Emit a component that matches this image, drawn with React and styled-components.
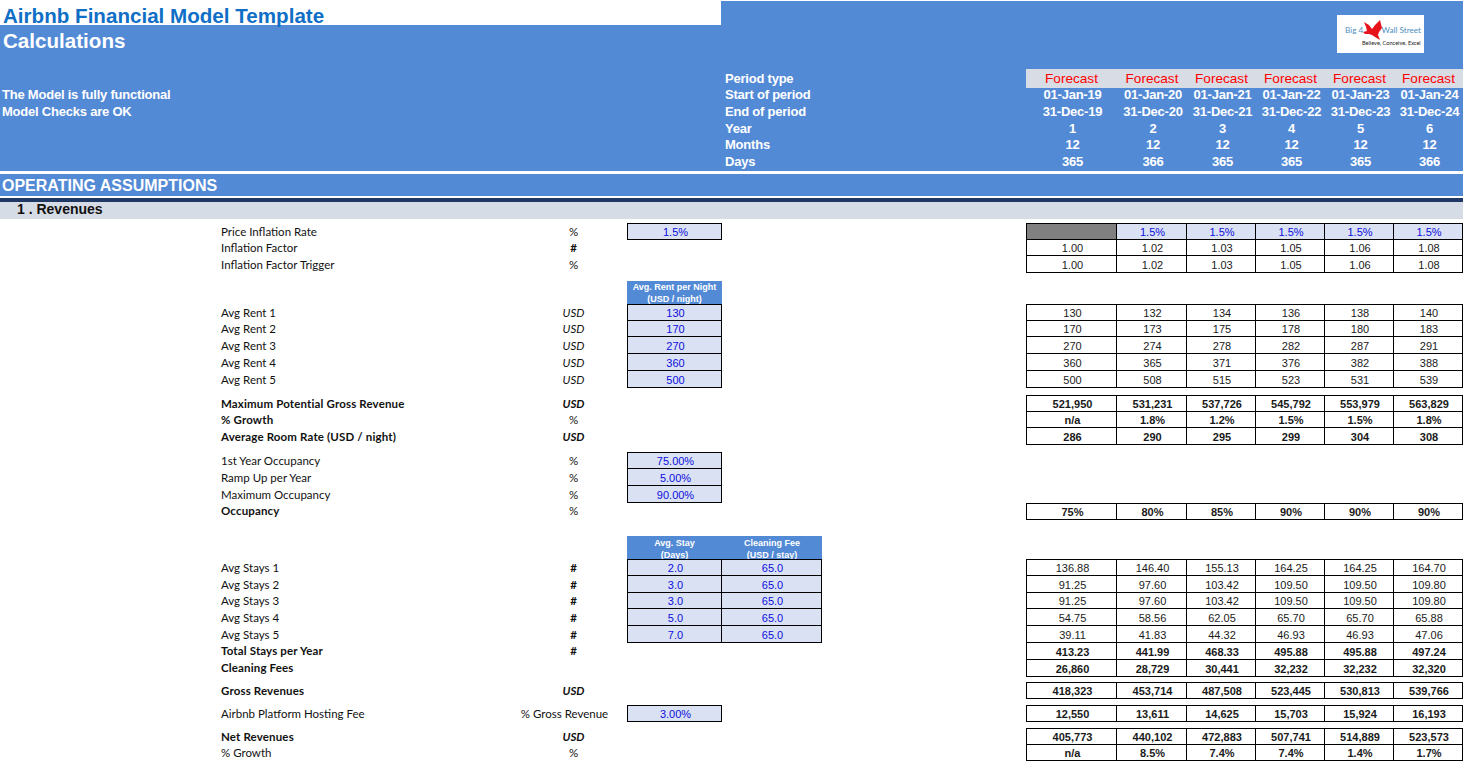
import React from 'react';
import styled, { createGlobalStyle } from 'styled-components';

const GlobalStyle = createGlobalStyle`
  html, body {
    margin: 0;
    padding: 0;
    background: #fff;
  }
  body {
    font-family: 'Liberation Sans', Arial, sans-serif;
  }
`;

const BLUE = '#538ad6';
const INPUT_BG = '#d9e1f2';
const COLUMNS = '220px 300px 107px 95px 100px 204px 91px 70px 69px 69px 69px 69px';

const Sheet = styled.div`
  width: 1463px;
  padding-top: 1px;
`;

const Banner = styled.div`
  background: ${BLUE};
  height: 170px;
`;

const BannerTop = styled.div`
  display: flex;
  height: 68px;
`;

const TitleColumn = styled.div`
  width: 721px;
`;

const TitleBox = styled.div`
  background: #fff;
  height: 25px;
  margin-top: -1px;
  padding: 4px 0 0 3px;
  box-sizing: border-box;
  color: #0f6fc6;
  font-size: 20.6px;
  font-weight: bold;
  line-height: 23px;
  white-space: nowrap;
`;

const Subtitle = styled.div`
  color: #fff;
  font-size: 20.6px;
  font-weight: bold;
  line-height: 24px;
  padding: 4px 0 0 3px;
`;

const LogoColumn = styled.div`
  flex: 1;
  display: flex;
  justify-content: flex-end;
  align-items: flex-start;
  padding: 14px 39px 0 0;
`;

const Logo = styled.div`
  position: relative;
  width: 87px;
  height: 38px;
  background: #fff;
  padding-top: 9px;
  box-sizing: border-box;
`;

const LogoLine = styled.div`
  display: flex;
  justify-content: space-between;
  padding: 0 3px 0 8px;
  color: #4f8fc0;
  font-family: 'Lato', sans-serif;
  font-size: 8.2px;
  line-height: 12px;
  white-space: nowrap;
`;

const LogoTag = styled.div`
  color: #222;
  font-family: 'Lato', sans-serif;
  font-size: 5.6px;
  line-height: 8px;
  margin: 3px 0 0 25px;
  white-space: nowrap;
`;

const Eagle = styled.svg`
  position: absolute;
  left: 25px;
  top: 5px;
  width: 20px;
  height: 20px;
`;

const PeriodRow = styled.div`
  display: grid;
  grid-template-columns: 721px 305px 91px 70px 69px 69px 69px 69px;
  height: ${(props) => props.$h}px;
  color: #fff;
  font-size: 13px;
  line-height: ${(props) => props.$h + 2}px;
  white-space: nowrap;
`;

const BannerNote = styled.div`
  padding-left: 2px;
  font-weight: bold;
  letter-spacing: -0.22px;
`;

const PeriodLabel = styled.div`
  padding-left: 4px;
  font-weight: bold;
  letter-spacing: -0.22px;
`;

const PeriodValue = styled.div`
  text-align: center;
  padding-left: ${(props) => (props.$forecast ? '0' : '2px')};
  font-size: ${(props) => (props.$forecast ? '13.6px' : '13px')};
  font-weight: ${(props) => (props.$forecast ? 'normal' : 'bold')};
  letter-spacing: ${(props) => (props.$forecast ? '0' : '-0.22px')};
  color: ${(props) => (props.$forecast ? '#ff0000' : '#fff')};
  background: ${(props) => (props.$forecast ? '#d8dce4' : 'transparent')};
`;

const SectionBar = styled.div`
  background: ${BLUE};
  margin-top: 3px;
  height: 22px;
  color: #fff;
  font-size: 16px;
  font-weight: bold;
  line-height: 24px;
  padding-left: 2px;
  overflow: hidden;
`;

const NavyRule = styled.div`
  background: #1f3864;
  height: 4px;
  margin-top: 2px;
`;

const SubSection = styled.div`
  background: #d6dce5;
  height: 17px;
  color: #111;
  font-size: 14px;
  font-weight: bold;
  line-height: 15px;
  padding-left: 17px;
`;

const Body = styled.div`
  padding-top: 4px;
`;

const Row = styled.div`
  display: grid;
  grid-template-columns: ${COLUMNS};
  height: ${(props) => props.$h}px;
`;

const Gap = styled.div`
  height: ${(props) => props.$h}px;
`;

const Label = styled.div`
  grid-column: 2;
  padding: 0 0 ${(props) => (props.$raise ? '3px' : '1px')} 1px;
  font-family: 'Lato', sans-serif;
  font-size: 11.5px;
  font-weight: ${(props) => (props.$bold ? 'bold' : 'normal')};
  letter-spacing: ${(props) => (props.$bold ? '0.15px' : '0')};
  color: #111;
  display: flex;
  align-items: center;
  white-space: nowrap;
`;

const Unit = styled.div`
  grid-column: 3;
  padding-bottom: ${(props) => (props.$raise ? '3px' : '1px')};
  padding-right: ${(props) => (props.$nudge ? '18px' : '0')};
  font-family: 'Lato', sans-serif;
  font-size: 11.5px;
  font-style: ${(props) => (props.$italic ? 'italic' : 'normal')};
  font-weight: ${(props) => (props.$bold ? 'bold' : 'normal')};
  color: #111;
  display: flex;
  align-items: center;
  justify-content: center;
  white-space: nowrap;
`;

const Cell = styled.div`
  box-sizing: border-box;
  grid-column: ${(props) => props.$col};
  display: flex;
  align-items: center;
  justify-content: center;
  padding-left: 2px;
  padding-top: ${(props) => (props.$top ? '0' : '1px')};
  font-size: 11px;
  font-weight: ${(props) => (props.$bold ? 'bold' : 'normal')};
  color: ${(props) => (props.$input ? '#0d0de0' : '#1a1a1a')};
  background: ${(props) => {
    if (props.$grey) return '#808080';
    return props.$input ? INPUT_BG : '#fff';
  }};
  border-right: 1px solid #000;
  border-bottom: 1px solid #000;
  border-left: ${(props) => (props.$left ? '1px solid #000' : 'none')};
  border-top: ${(props) => (props.$top ? '1px solid #000' : 'none')};
`;

const HeadCell = styled.div`
  grid-column: ${(props) => props.$col};
  box-sizing: border-box;
  background: ${BLUE};
  color: #fff;
  font-size: 9px;
  font-weight: bold;
  line-height: 12px;
  text-align: center;
  overflow: hidden;
  padding-top: ${(props) => (props.$low ? '1px' : '0')};
`;

const HEIGHT = [17, 16, 17, 17, 16, 17];

const PERIODS = [
  ['Period type', ['Forecast', 'Forecast', 'Forecast', 'Forecast', 'Forecast', 'Forecast']],
  ['Start of period', ['01-Jan-19', '01-Jan-20', '01-Jan-21', '01-Jan-22', '01-Jan-23', '01-Jan-24'], 'The Model is fully functional'],
  ['End of period', ['31-Dec-19', '31-Dec-20', '31-Dec-21', '31-Dec-22', '31-Dec-23', '31-Dec-24'], 'Model Checks are OK'],
  ['Year', ['1', '2', '3', '4', '5', '6']],
  ['Months', ['12', '12', '12', '12', '12', '12']],
  ['Days', ['365', '366', '365', '365', '365', '366']],
];

const ROWS = [
  { h: 17, top: true, label: 'Price Inflation Rate', unit: '%', inputs: ['1.5%'], values: ['', '1.5%', '1.5%', '1.5%', '1.5%', '1.5%'], assumption: true },
  { h: 16, label: 'Inflation Factor', unit: '#', values: ['1.00', '1.02', '1.03', '1.05', '1.06', '1.08'], boldUnit: true },
  { h: 17, label: 'Inflation Factor Trigger', unit: '%', values: ['1.00', '1.02', '1.03', '1.05', '1.06', '1.08'] },
  { gap: 8 },
  { h: 23, head: ['Avg. Rent per Night', '(USD / night)'] },
  { h: 17, top: true, label: 'Avg Rent 1', unit: 'USD', italic: true, inputs: ['130'], values: ['130', '132', '134', '136', '138', '140'] },
  { h: 16, label: 'Avg Rent 2', unit: 'USD', italic: true, inputs: ['170'], values: ['170', '173', '175', '178', '180', '183'] },
  { h: 17, label: 'Avg Rent 3', unit: 'USD', italic: true, inputs: ['270'], values: ['270', '274', '278', '282', '287', '291'] },
  { h: 17, label: 'Avg Rent 4', unit: 'USD', italic: true, inputs: ['360'], values: ['360', '365', '371', '376', '382', '388'] },
  { h: 17, label: 'Avg Rent 5', unit: 'USD', italic: true, inputs: ['500'], values: ['500', '508', '515', '523', '531', '539'] },
  { gap: 7 },
  { h: 17, top: true, bold: true, label: 'Maximum Potential Gross Revenue', unit: 'USD', italic: true, boldUnit: true, values: ['521,950', '531,231', '537,726', '545,792', '553,979', '563,829'] },
  { h: 16, bold: true, label: '% Growth', unit: '%', values: ['n/a', '1.8%', '1.2%', '1.5%', '1.5%', '1.8%'] },
  { h: 17, bold: true, label: 'Average Room Rate (USD / night)', unit: 'USD', italic: true, boldUnit: true, values: ['286', '290', '295', '299', '304', '308'] },
  { gap: 7 },
  { h: 17, top: true, label: '1st Year Occupancy', unit: '%', inputs: ['75.00%'] },
  { h: 17, label: 'Ramp Up per Year', unit: '%', inputs: ['5.00%'] },
  { h: 17, label: 'Maximum Occupancy', unit: '%', inputs: ['90.00%'] },
  { h: 17, top: true, bold: true, raise: true, label: 'Occupancy', unit: '%', values: ['75%', '80%', '85%', '90%', '90%', '90%'] },
  { gap: 16 },
  { h: 23, low: true, head: ['Avg. Stay', '(Days)'], head2: ['Cleaning Fee', '(USD / stay)'] },
  { h: 17, top: true, label: 'Avg Stays 1', unit: '#', boldUnit: true, inputs: ['2.0', '65.0'], values: ['136.88', '146.40', '155.13', '164.25', '164.25', '164.70'] },
  { h: 17, label: 'Avg Stays 2', unit: '#', boldUnit: true, inputs: ['3.0', '65.0'], values: ['91.25', '97.60', '103.42', '109.50', '109.50', '109.80'] },
  { h: 16, label: 'Avg Stays 3', unit: '#', boldUnit: true, inputs: ['3.0', '65.0'], values: ['91.25', '97.60', '103.42', '109.50', '109.50', '109.80'] },
  { h: 17, label: 'Avg Stays 4', unit: '#', boldUnit: true, inputs: ['5.0', '65.0'], values: ['54.75', '58.56', '62.05', '65.70', '65.70', '65.88'] },
  { h: 17, label: 'Avg Stays 5', unit: '#', boldUnit: true, inputs: ['7.0', '65.0'], values: ['39.11', '41.83', '44.32', '46.93', '46.93', '47.06'] },
  { h: 17, bold: true, raise: true, label: 'Total Stays per Year', unit: '#', boldUnit: true, values: ['413.23', '441.99', '468.33', '495.88', '495.88', '497.24'] },
  { h: 17, bold: true, raise: true, label: 'Cleaning Fees', values: ['26,860', '28,729', '30,441', '32,232', '32,232', '32,320'] },
  { gap: 5 },
  { h: 17, top: true, bold: true, label: 'Gross Revenues', unit: 'USD', italic: true, boldUnit: true, values: ['418,323', '453,714', '487,508', '523,445', '530,813', '539,766'] },
  { gap: 6 },
  { h: 17, top: true, boldValues: true, label: 'Airbnb Platform Hosting Fee', unit: '% Gross Revenue', nudge: true, inputs: ['3.00%'], values: ['12,550', '13,611', '14,625', '15,703', '15,924', '16,193'] },
  { gap: 6 },
  { h: 17, top: true, bold: true, label: 'Net Revenues', unit: 'USD', italic: true, boldUnit: true, values: ['405,773', '440,102', '472,883', '507,741', '514,889', '523,573'] },
  { h: 16, boldValues: true, label: '% Growth', unit: '%', values: ['n/a', '8.5%', '7.4%', '7.4%', '1.4%', '1.7%'] },
];

const SheetRow = ({ row }) => {
  if (row.gap) return <Gap $h={row.gap} />;
  if (row.head) {
    return (
      <Row $h={row.h}>
        <HeadCell $col={4} $low={row.low}>{row.head[0]}<br />{row.head[1]}</HeadCell>
        {row.head2 && <HeadCell $col={5} $low={row.low}>{row.head2[0]}<br />{row.head2[1]}</HeadCell>}
      </Row>
    );
  }
  const boldValues = row.bold || row.boldValues;
  return (
    <Row $h={row.h}>
      <Label $bold={row.bold} $raise={row.raise}>{row.label}</Label>
      {row.unit && (
        <Unit $italic={row.italic} $bold={row.boldUnit} $nudge={row.nudge} $raise={row.raise}>{row.unit}</Unit>
      )}
      {row.inputs && row.inputs.map((value, i) => (
        <Cell key={i} $col={4 + i} $input $left={i === 0} $top={row.top}>{value}</Cell>
      ))}
      {row.values && row.values.map((value, i) => (
        <Cell
          key={i}
          $col={7 + i}
          $left={i === 0}
          $top={row.top}
          $bold={boldValues}
          $input={row.assumption && i > 0}
          $grey={row.assumption && i === 0}
        >
          {value}
        </Cell>
      ))}
    </Row>
  );
};

const App = () => (
  <Sheet>
    <GlobalStyle />
    <Banner>
      <BannerTop>
        <TitleColumn>
          <TitleBox>Airbnb Financial Model Template</TitleBox>
          <Subtitle>Calculations</Subtitle>
        </TitleColumn>
        <LogoColumn>
          <Logo>
            <LogoLine>
              <span>Big 4</span>
              <span>Wall Street</span>
            </LogoLine>
            <LogoTag>Believe, Conceive, Excel</LogoTag>
            <Eagle viewBox="0 0 20 20">
              <path
                fill="#e8141c"
                d="M2 2 L7 5 L10 9 L13 5 L18 0 L19 4 L20 8 L17 12 L16 15 L18 20 L13 17 L10 15 L7 14 L3 14 L1 12 L5 11 L4 7 Z"
              />
            </Eagle>
          </Logo>
        </LogoColumn>
      </BannerTop>
      {PERIODS.map(([label, values, note], i) => (
        <PeriodRow key={label} $h={HEIGHT[i]}>
          <BannerNote>{note}</BannerNote>
          <PeriodLabel>{label}</PeriodLabel>
          {values.map((value, j) => (
            <PeriodValue key={j} $forecast={i === 0}>{value}</PeriodValue>
          ))}
        </PeriodRow>
      ))}
    </Banner>
    <SectionBar>OPERATING ASSUMPTIONS</SectionBar>
    <NavyRule />
    <SubSection>1 . Revenues</SubSection>
    <Body>
      {ROWS.map((row, i) => (
        <SheetRow key={i} row={row} />
      ))}
    </Body>
  </Sheet>
);

export default App;
